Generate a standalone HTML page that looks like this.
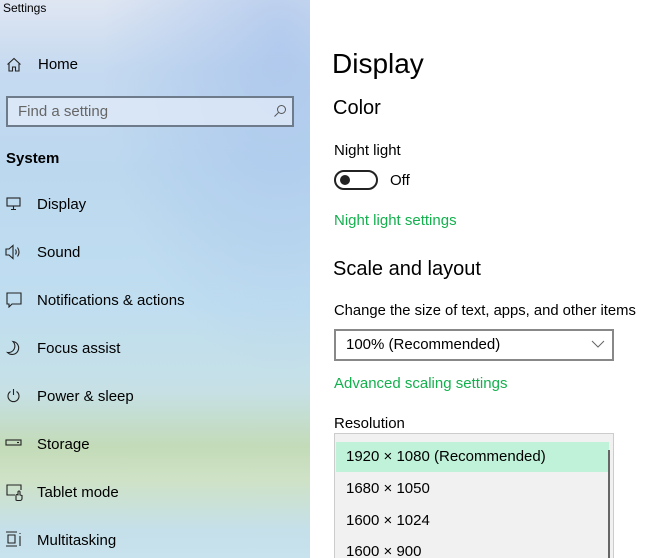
<!DOCTYPE html>
<html><head><style>
*{margin:0;padding:0;box-sizing:border-box}
html,body{width:645px;height:558px;overflow:hidden}
body{font-family:"Liberation Sans",sans-serif;background:#fff;position:relative;color:#000}
#side{position:absolute;left:0;top:0;width:310px;height:558px;
background:linear-gradient(180deg,#dfe6f2 0%,#c6daf0 12%,#bcd8ef 30%,#c0def0 55%,#c6e0e6 70%,#c3dbb8 80%,#cfe2c6 86%,#c5e0ea 95%,#c8e2ee 100%);}
#side:after{content:"";position:absolute;inset:0;background:radial-gradient(ellipse at 90% 8%,rgba(160,190,235,.6),rgba(160,190,235,0) 45%)}
.t{position:absolute;white-space:nowrap;z-index:2}
.ic{position:absolute;z-index:2}
.s15{font-size:15px}
.green{color:#14b04e;font-size:15px}
</style></head><body>
<div id="side"></div>
<div class="t" style="left:3px;top:1px;font-size:12px">Settings</div>
<svg class="ic" style="left:6px;top:57px" width="16" height="16" viewBox="0 0 16 16" fill="none" stroke="#222" stroke-width="1.1"><path d="M1.5 7.5 8 1.5l6.5 6M3 6.5V14h3.5v-4h3v4H13V6.5"/></svg>
<div class="t s15" style="left:38px;top:56px">Home</div>
<div class="ic" style="left:6px;top:96px;width:288px;height:31px;border:2px solid #6e7b8a;background:rgba(225,235,248,.75)"></div>
<div class="t s15" style="left:18px;top:103px;color:#666">Find a setting</div>
<svg class="ic" style="left:273px;top:104px" width="14" height="14" viewBox="0 0 14 14" fill="none" stroke="#555" stroke-width="1"><circle cx="8.5" cy="5.5" r="4"/><path d="M5.5 8.5 1.5 12.5"/></svg>
<div class="t" style="left:6px;top:150px;font-size:15px;font-weight:bold">System</div>
<svg class="ic" style="left:6px;top:197px" width="16" height="14" viewBox="0 0 16 14" fill="none" stroke="#222" stroke-width="1.1"><rect x="1" y="1" width="13" height="8"/><path d="M7.5 9v3M5 12.5h5"/></svg>
<div class="t s15" style="left:37px;top:196px">Display</div>
<svg class="ic" style="left:5px;top:244px" width="18" height="16" viewBox="0 0 18 16" fill="none" stroke="#222" stroke-width="1.1"><path d="M1 5h3l4-3.5v13L4 11H1z"/><path d="M10.5 5.5q1.5 2.5 0 5M12.5 3.5q3 4.5 0 9"/></svg>
<div class="t s15" style="left:37px;top:244px">Sound</div>
<svg class="ic" style="left:6px;top:292px" width="16" height="16" viewBox="0 0 16 16" fill="none" stroke="#222" stroke-width="1.1"><path d="M1 1h14v11H6l-3 3v-3H1z"/></svg>
<div class="t s15" style="left:37px;top:292px">Notifications &amp; actions</div>
<svg class="ic" style="left:6px;top:340px" width="16" height="16" viewBox="0 0 16 16" fill="none" stroke="#222" stroke-width="1.1"><path d="M7 1.5a6.5 6.5 0 0 1-5.5 11A6.5 6.5 0 1 0 7 1.5z"/></svg>
<div class="t s15" style="left:37px;top:340px">Focus assist</div>
<svg class="ic" style="left:6px;top:388px" width="16" height="16" viewBox="0 0 16 16" fill="none" stroke="#222" stroke-width="1.1"><path d="M7.5 1v6M4.5 3.5a5.5 5.5 0 1 0 6 0"/></svg>
<div class="t s15" style="left:37px;top:388px">Power &amp; sleep</div>
<svg class="ic" style="left:5px;top:438px" width="18" height="10" viewBox="0 0 18 10" fill="none" stroke="#222" stroke-width="1.1"><rect x="1" y="2" width="15" height="5"/><path d="M12 4.5h2"/></svg>
<div class="t s15" style="left:37px;top:436px">Storage</div>
<svg class="ic" style="left:6px;top:484px" width="18" height="17" viewBox="0 0 18 17" fill="none" stroke="#222" stroke-width="1.1"><path d="M9 11H1V1h14v5"/><path d="M10 16v-4.5a1 1 0 0 1 2 0V8a1 1 0 0 1 2 0v3l2 .5v3a2 2 0 0 1-2 2h-3z"/></svg>
<div class="t s15" style="left:37px;top:484px">Tablet mode</div>
<svg class="ic" style="left:5px;top:531px" width="18" height="17" viewBox="0 0 18 17" fill="none" stroke="#222" stroke-width="1.1"><path d="M1 1h11M1 15h11M3 4h7v8H3z"/><path d="M15 2v1M15 5v10"/></svg>
<div class="t s15" style="left:37px;top:532px">Multitasking</div>

<div class="t" style="left:332px;top:48px;font-size:28px">Display</div>
<div class="t" style="left:333px;top:97px;font-size:20px">Color</div>
<div class="t s15" style="left:334px;top:142px">Night light</div>
<div class="ic" style="left:334px;top:170px;width:44px;height:20px;border:2px solid #222;border-radius:10px"><div style="position:absolute;left:4px;top:3px;width:10px;height:10px;border-radius:50%;background:#222"></div></div>
<div class="t s15" style="left:390px;top:172px">Off</div>
<div class="t green" style="left:334px;top:212px">Night light settings</div>
<div class="t" style="left:333px;top:258px;font-size:20px">Scale and layout</div>
<div class="t" style="left:334px;top:303px;font-size:14.8px">Change the size of text, apps, and other items</div>
<div class="ic" style="left:334px;top:329px;width:280px;height:32px;border:2px solid #888;background:#fff"></div>
<div class="t s15" style="left:346px;top:336px">100% (Recommended)</div>
<svg class="ic" style="left:591px;top:340px" width="14" height="9" viewBox="0 0 14 9" fill="none" stroke="#666" stroke-width="1"><path d="M1 1l6 6 6-6"/></svg>
<div class="t green" style="left:334px;top:375px">Advanced scaling settings</div>
<div class="t s15" style="left:334px;top:415px">Resolution</div>
<div class="ic" style="left:334px;top:433px;width:280px;height:125px;border:1px solid #ccc;border-bottom:none;background:#f1f1f1"></div>
<div class="ic" style="left:336px;top:442px;width:273px;height:30px;background:#bff2d8"></div>
<div class="ic" style="left:608px;top:450px;width:2px;height:108px;background:#666"></div>
<div class="t s15" style="left:346px;top:448px">1920 × 1080 (Recommended)</div>
<div class="t s15" style="left:346px;top:480px">1680 × 1050</div>
<div class="t s15" style="left:346px;top:512px">1600 × 1024</div>
<div class="t s15" style="left:346px;top:543px">1600 × 900</div>
</body></html>
